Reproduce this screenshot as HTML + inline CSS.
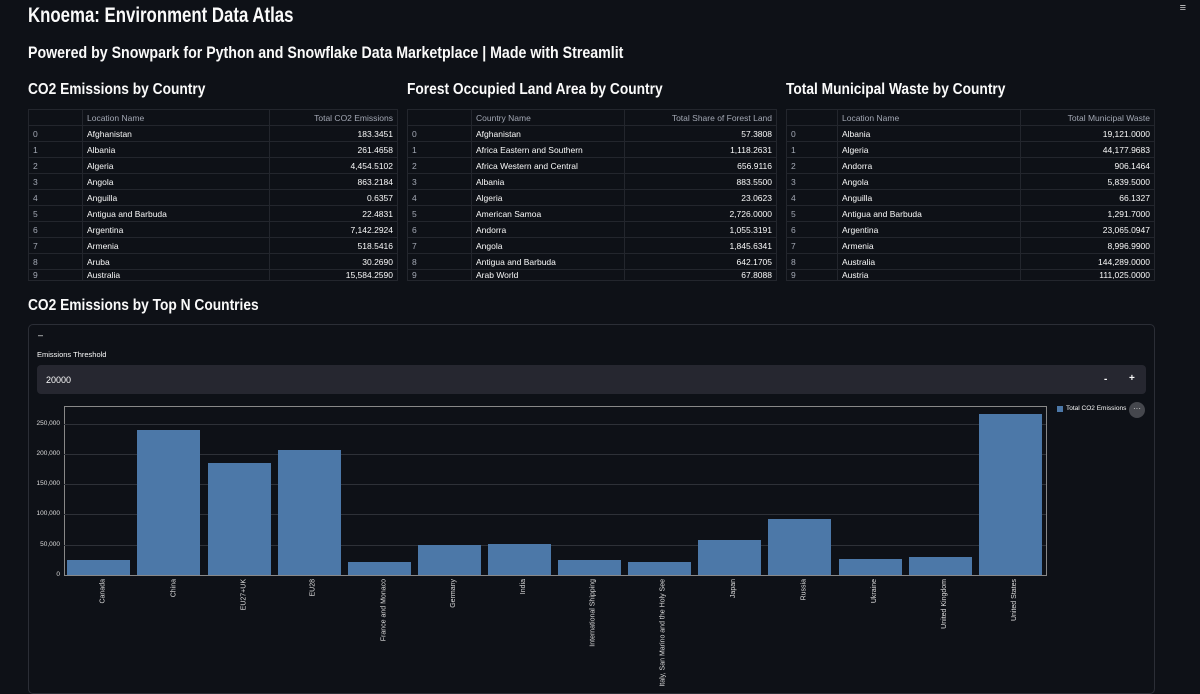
<!DOCTYPE html>
<html><head><meta charset="utf-8"><style>
*{margin:0;padding:0;box-sizing:border-box}
body{width:1200px;height:682px;overflow:hidden;background:#0e1117;color:#fafafa;font-family:"Liberation Sans",sans-serif;position:relative}
.a{position:absolute;white-space:nowrap}
h1{position:absolute;left:28px;top:4px;font-size:21px;font-weight:bold;transform:scaleX(0.8);transform-origin:left top;white-space:nowrap}
h2{position:absolute;font-size:16px;font-weight:bold;transform:scaleX(0.86);transform-origin:left top;white-space:nowrap}
table{position:absolute;border-collapse:collapse;font-size:8.5px;table-layout:fixed}
td,th{border:1px solid #23262d;height:16px;padding:0 4px;overflow:hidden;white-space:nowrap}
th{font-weight:normal;color:#a3a8b4;text-align:left}
th.r,td.r{text-align:right}
td.i{color:#a3a8b4}
.bar{position:absolute;background:#4c78a8;width:63px}
.xl{position:absolute;font-size:7px;color:#ddd;transform:rotate(-90deg);transform-origin:right top;text-align:right;white-space:nowrap}
.yl{position:absolute;font-size:6.5px;color:#ddd;right:1140px}
.g{position:absolute;left:64px;width:982px;height:1px;background:#2e3138}
</style></head><body>
<h1>Knoema: Environment Data Atlas</h1>
<div style="position:absolute;right:14px;top:2px;font-size:11px;color:#ccc">≡</div>
<h2 style="left:28px;top:44px;font-size:16.5px">Powered by Snowpark for Python and Snowflake Data Marketplace | Made with Streamlit</h2>
<h2 style="left:28px;top:81px">CO2 Emissions by Country</h2>
<h2 style="left:407px;top:81px">Forest Occupied Land Area by Country</h2>
<h2 style="left:786px;top:81px">Total Municipal Waste by Country</h2>

<table style="left:28px;top:109px;width:370px"><col style="width:54px"><col style="width:187px"><col>
<tr><th></th><th>Location Name</th><th class="r">Total CO2 Emissions</th></tr>
<tr><td class="i">0</td><td>Afghanistan</td><td class="r">183.3451</td></tr>
<tr><td class="i">1</td><td>Albania</td><td class="r">261.4658</td></tr>
<tr><td class="i">2</td><td>Algeria</td><td class="r">4,454.5102</td></tr>
<tr><td class="i">3</td><td>Angola</td><td class="r">863.2184</td></tr>
<tr><td class="i">4</td><td>Anguilla</td><td class="r">0.6357</td></tr>
<tr><td class="i">5</td><td>Antigua and Barbuda</td><td class="r">22.4831</td></tr>
<tr><td class="i">6</td><td>Argentina</td><td class="r">7,142.2924</td></tr>
<tr><td class="i">7</td><td>Armenia</td><td class="r">518.5416</td></tr>
<tr><td class="i">8</td><td>Aruba</td><td class="r">30.2690</td></tr>
<tr><td class="i" style="height:10px;vertical-align:top">9</td><td style="height:10px;vertical-align:top">Australia</td><td class="r" style="height:10px;vertical-align:top">15,584.2590</td></tr>
</table>
<table style="left:407px;top:109px;width:370px"><col style="width:64px"><col style="width:153px"><col>
<tr><th></th><th>Country Name</th><th class="r">Total Share of Forest Land</th></tr>
<tr><td class="i">0</td><td>Afghanistan</td><td class="r">57.3808</td></tr>
<tr><td class="i">1</td><td>Africa Eastern and Southern</td><td class="r">1,118.2631</td></tr>
<tr><td class="i">2</td><td>Africa Western and Central</td><td class="r">656.9116</td></tr>
<tr><td class="i">3</td><td>Albania</td><td class="r">883.5500</td></tr>
<tr><td class="i">4</td><td>Algeria</td><td class="r">23.0623</td></tr>
<tr><td class="i">5</td><td>American Samoa</td><td class="r">2,726.0000</td></tr>
<tr><td class="i">6</td><td>Andorra</td><td class="r">1,055.3191</td></tr>
<tr><td class="i">7</td><td>Angola</td><td class="r">1,845.6341</td></tr>
<tr><td class="i">8</td><td>Antigua and Barbuda</td><td class="r">642.1705</td></tr>
<tr><td class="i" style="height:10px;vertical-align:top">9</td><td style="height:10px;vertical-align:top">Arab World</td><td class="r" style="height:10px;vertical-align:top">67.8088</td></tr>
</table>
<table style="left:786px;top:109px;width:369px"><col style="width:51px"><col style="width:183px"><col>
<tr><th></th><th>Location Name</th><th class="r">Total Municipal Waste</th></tr>
<tr><td class="i">0</td><td>Albania</td><td class="r">19,121.0000</td></tr>
<tr><td class="i">1</td><td>Algeria</td><td class="r">44,177.9683</td></tr>
<tr><td class="i">2</td><td>Andorra</td><td class="r">906.1464</td></tr>
<tr><td class="i">3</td><td>Angola</td><td class="r">5,839.5000</td></tr>
<tr><td class="i">4</td><td>Anguilla</td><td class="r">66.1327</td></tr>
<tr><td class="i">5</td><td>Antigua and Barbuda</td><td class="r">1,291.7000</td></tr>
<tr><td class="i">6</td><td>Argentina</td><td class="r">23,065.0947</td></tr>
<tr><td class="i">7</td><td>Armenia</td><td class="r">8,996.9900</td></tr>
<tr><td class="i">8</td><td>Australia</td><td class="r">144,289.0000</td></tr>
<tr><td class="i" style="height:10px;vertical-align:top">9</td><td style="height:10px;vertical-align:top">Austria</td><td class="r" style="height:10px;vertical-align:top">111,025.0000</td></tr>
</table>

<h2 style="left:28px;top:297px">CO2 Emissions by Top N Countries</h2>
<div style="position:absolute;left:28px;top:324px;width:1127px;height:370px;border:1px solid #2b2e36;border-radius:5px"></div>
<div class="a" style="left:38px;top:330px;font-size:9px">–</div>
<div class="a" style="left:37px;top:350px;font-size:7.5px">Emissions Threshold</div>
<div style="position:absolute;left:37px;top:365px;width:1109px;height:29px;background:#262730;border-radius:4px"></div>
<div class="a" style="left:46px;top:375px;font-size:9px">20000</div>
<div class="a" style="left:1104px;top:374px;font-size:10px;font-weight:bold">-</div>
<div class="a" style="left:1129px;top:373px;font-size:10px;font-weight:bold">+</div>

<div style="position:absolute;left:64px;top:406px;width:983px;height:170px;border:1px solid #888"></div>
<div class="g" style="top:424px"></div><div class="g" style="top:454px"></div><div class="g" style="top:484px"></div><div class="g" style="top:514px"></div><div class="g" style="top:545px"></div>
<div class="yl" style="top:420px">250,000</div><div class="yl" style="top:450px">200,000</div><div class="yl" style="top:480px">150,000</div><div class="yl" style="top:510px">100,000</div><div class="yl" style="top:541px">50,000</div><div class="yl" style="top:571px">0</div>

<div class="bar" style="left:67px;top:560px;height:15px"></div>
<div class="bar" style="left:137px;top:430px;height:145px"></div>
<div class="bar" style="left:208px;top:463px;height:112px"></div>
<div class="bar" style="left:278px;top:450px;height:125px"></div>
<div class="bar" style="left:348px;top:562px;height:13px"></div>
<div class="bar" style="left:418px;top:545px;height:30px"></div>
<div class="bar" style="left:488px;top:544px;height:31px"></div>
<div class="bar" style="left:558px;top:560px;height:15px"></div>
<div class="bar" style="left:628px;top:562px;height:13px"></div>
<div class="bar" style="left:698px;top:540px;height:35px"></div>
<div class="bar" style="left:768px;top:519px;height:56px"></div>
<div class="bar" style="left:839px;top:559px;height:16px"></div>
<div class="bar" style="left:909px;top:557px;height:18px"></div>
<div class="bar" style="left:979px;top:414px;height:161px"></div>

<div class="xl" style="right:1100px;top:579px">Canada</div>
<div class="xl" style="right:1030px;top:579px">China</div>
<div class="xl" style="right:960px;top:579px">EU27+UK</div>
<div class="xl" style="right:890px;top:579px">EU28</div>
<div class="xl" style="right:820px;top:579px">France and Monaco</div>
<div class="xl" style="right:750px;top:579px">Germany</div>
<div class="xl" style="right:680px;top:579px">India</div>
<div class="xl" style="right:610px;top:579px">International Shipping</div>
<div class="xl" style="right:540px;top:579px">Italy, San Marino and the Holy See</div>
<div class="xl" style="right:470px;top:579px">Japan</div>
<div class="xl" style="right:400px;top:579px">Russia</div>
<div class="xl" style="right:329px;top:579px">Ukraine</div>
<div class="xl" style="right:259px;top:579px">United Kingdom</div>
<div class="xl" style="right:189px;top:579px">United States</div>

<div style="position:absolute;left:1057px;top:406px;width:6px;height:6px;background:#4c78a8"></div>
<div class="a" style="left:1066px;top:405px;font-size:6.5px">Total CO2 Emissions</div>
<div style="position:absolute;left:1129px;top:402px;width:16px;height:16px;border-radius:50%;background:#45474d;color:#ddd;font-size:8px;text-align:center;line-height:13px">···</div>
</body></html>
